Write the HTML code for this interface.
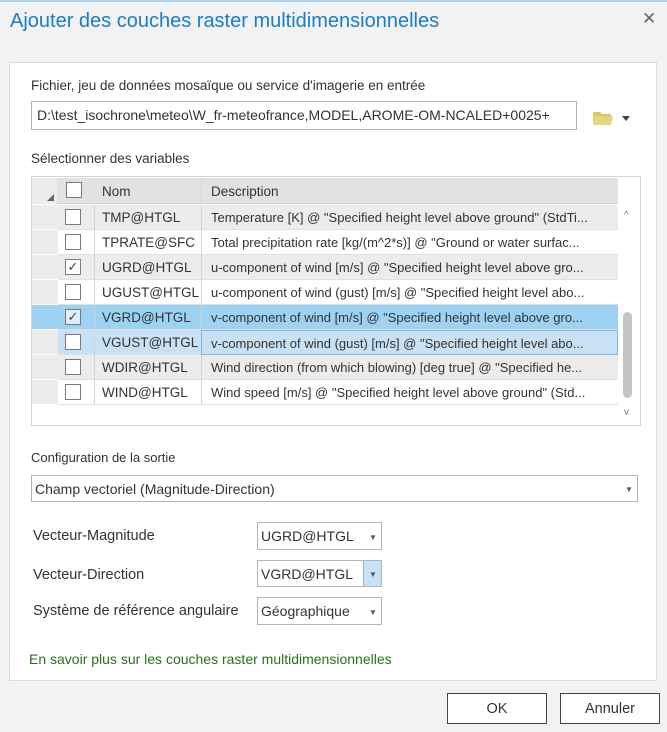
<!DOCTYPE html>
<html><head><meta charset="utf-8"><style>
*{box-sizing:border-box;margin:0;padding:0}
body{width:667px;height:732px;background:#f2f2f2;font-family:"Liberation Sans",sans-serif;font-size:14px;color:#333;position:relative;overflow:hidden}
.a{position:absolute}
.topline{left:0;top:0;width:667px;height:2px;background:#a9d2ee}
.title{left:10px;top:10px;font-size:20px;color:#1c7cc4}
.close{left:642px;top:9px;font-size:17px;color:#666;font-weight:300}
.panel{left:9px;top:62px;width:648px;height:619px;background:#fff;border:1px solid #dcdcdc}
.lbl{font-size:13.5px;color:#333;white-space:nowrap}
.input{left:31px;top:101px;width:546px;height:29px;border:1px solid #b4b4b4;background:#fff;padding:5px 0 0 5px;white-space:nowrap;overflow:hidden;font-size:14px}
.table{left:31px;top:176px;width:610px;height:250px;border:1px solid #d4d4d4;background:#fff;font-size:13px}
.row{position:absolute;left:0;width:586px;height:25px;border-bottom:1px solid #e0e0e0}
.rh{position:absolute;left:0;width:26px;height:25px;background:#ececec;border-bottom:1px solid #fff}
.cb{position:absolute;left:34px;top:4px;width:16px;height:16px;border:1px solid #7a7a7a;background:#fff;font-size:13px;line-height:14px;text-align:center;color:#444}
.nm{position:absolute;left:62px;top:5px;white-space:nowrap;font-size:13.5px}
.ds{position:absolute;left:169px;top:0;width:417px;height:25px;border-left:1px solid #d4d4d4;padding:5px 0 0 9px;white-space:nowrap;overflow:hidden;font-size:13px}
.cd{position:absolute;left:62px;top:0;height:25px;border-left:1px solid #d4d4d4}
.sel{border:1px solid #b4b4b4;background:#fff;padding:5px 0 0 3px;white-space:nowrap;font-size:14px}
.arr{position:absolute;font-size:8px;color:#555}
.btn{border:1px solid #444;background:#fff;text-align:center;padding-top:7px;font-size:14.5px}
</style></head><body>
<div class="a topline"></div>
<div class="a title">Ajouter des couches raster multidimensionnelles</div>
<div class="a close">✕</div>
<div class="a panel"></div>
<div class="a lbl" style="left:31px;top:78px">Fichier, jeu de données mosaïque ou service d'imagerie en entrée</div>
<div class="a input">D:\test_isochrone\meteo\W_fr-meteofrance,MODEL,AROME-OM-NCALED+0025+</div>
<svg class="a" style="left:592px;top:110px" width="22" height="16"><path d="M1 2h7l2 2h9v3H1z" fill="#d9c66a"/><path d="M1 6h20l-2 9H1z" fill="#e6d57f"/></svg>
<div class="a" style="left:622px;top:116px;width:0;height:0;border-left:4px solid transparent;border-right:4px solid transparent;border-top:5px solid #444"></div>
<div class="a lbl" style="left:31px;top:151px">Sélectionner des variables</div>
<div class="a table">
 <div style="position:absolute;left:0;top:0;width:586px;height:27px;background:#fff"></div>
 <div style="position:absolute;left:0;top:1px;width:26px;height:26px;background:#ececec"></div>
 <div style="position:absolute;left:25px;top:1px;width:561px;height:26px;background:#e2e2e2;border-bottom:1px solid #d4d4d4"></div>
 <div style="position:absolute;left:15px;top:17px;width:0;height:0;border-left:7px solid transparent;border-bottom:7px solid #666"></div>
 <div class="cb" style="top:5px;left:34px"></div>
 <div style="position:absolute;left:70px;top:7px;font-size:13.5px">Nom</div>
 <div style="position:absolute;left:169px;top:1px;height:26px;border-left:1px solid #d4d4d4;padding:6px 0 0 9px;font-size:13.5px">Description</div>
 <div class="row" style="top:28px;background:#ececec"><div class="rh"></div><div class="cb" style="left:33px"></div><div class="nm" style="left:70px">TMP@HTGL</div><div class="cd"></div><div class="ds">Temperature [K] @ "Specified height level above ground" (StdTi...</div></div>
 <div class="row" style="top:53px;background:#fff"><div class="rh"></div><div class="cb" style="left:33px"></div><div class="nm" style="left:70px">TPRATE@SFC</div><div class="cd"></div><div class="ds">Total precipitation rate [kg/(m^2*s)] @ "Ground or water surfac...</div></div>
 <div class="row" style="top:78px;background:#ececec"><div class="rh"></div><div class="cb" style="left:33px">✓</div><div class="nm" style="left:70px">UGRD@HTGL</div><div class="cd"></div><div class="ds">u-component of wind [m/s] @ "Specified height level above gro...</div></div>
 <div class="row" style="top:103px;background:#fff"><div class="rh"></div><div class="cb" style="left:33px"></div><div class="nm" style="left:70px">UGUST@HTGL</div><div class="cd"></div><div class="ds">u-component of wind (gust) [m/s] @ "Specified height level abo...</div></div>
 <div class="row" style="top:128px;background:#9ed2f2"><div class="rh" style="background:#9ed2f2"></div><div class="cb" style="left:33px;background:#ddeefa">✓</div><div class="nm" style="left:70px">VGRD@HTGL</div><div class="cd"></div><div class="ds">v-component of wind [m/s] @ "Specified height level above gro...</div></div>
 <div class="row" style="top:153px;background:#c9e1f4"><div class="rh" style="background:#ececec"></div><div class="cb" style="left:33px"></div><div class="nm" style="left:70px">VGUST@HTGL</div><div class="cd"></div><div class="ds" style="border:1px solid #7fb6e3">v-component of wind (gust) [m/s] @ "Specified height level abo...</div></div>
 <div class="row" style="top:178px;background:#ececec"><div class="rh"></div><div class="cb" style="left:33px"></div><div class="nm" style="left:70px">WDIR@HTGL</div><div class="cd"></div><div class="ds">Wind direction (from which blowing) [deg true] @ "Specified he...</div></div>
 <div class="row" style="top:203px;background:#fff"><div class="rh" style="background:#ececec"></div><div class="cb" style="left:33px"></div><div class="nm" style="left:70px">WIND@HTGL</div><div class="cd"></div><div class="ds">Wind speed [m/s] @ "Specified height level above ground" (Std...</div></div>
 <div style="position:absolute;left:592px;top:33px;font-size:10px;color:#777">^</div>
 <div style="position:absolute;left:591px;top:135px;width:9px;height:86px;border-radius:5px;background:#c4c4c4"></div>
 <div style="position:absolute;left:592px;top:230px;font-size:10px;color:#777">v</div>
</div>
<div class="a lbl" style="left:31px;top:450px;font-size:13px">Configuration de la sortie</div>
<div class="a sel" style="left:31px;top:475px;width:607px;height:27px">Champ vectoriel (Magnitude-Direction)</div>
<div class="a arr" style="left:625px;top:485px">▼</div>
<div class="a lbl" style="left:33px;top:528px;font-size:14.5px">Vecteur-Magnitude</div>
<div class="a lbl" style="left:33px;top:567px;font-size:14.5px">Vecteur-Direction</div>
<div class="a lbl" style="left:33px;top:603px;font-size:14.5px">Système de référence angulaire</div>
<div class="a sel" style="left:257px;top:522px;width:125px;height:28px">UGRD@HTGL</div><div class="a arr" style="left:369px;top:533px">▼</div>
<div class="a sel" style="left:257px;top:560px;width:125px;height:27px">VGRD@HTGL</div>
<div class="a" style="left:363px;top:561px;width:18px;height:25px;background:#c9e1f4;border-left:1px solid #7fb6e3"></div><div class="a arr" style="left:369px;top:570px">▼</div>
<div class="a sel" style="left:257px;top:597px;width:125px;height:28px">Géographique</div><div class="a arr" style="left:369px;top:608px">▼</div>
<div class="a lbl" style="left:29px;top:651px;color:#2a6e1e;font-size:14px">En savoir plus sur les couches raster multidimensionnelles</div>
<div class="a btn" style="left:447px;top:693px;width:100px;height:31px">OK</div>
<div class="a btn" style="left:560px;top:693px;width:100px;height:31px">Annuler</div>
</body></html>
